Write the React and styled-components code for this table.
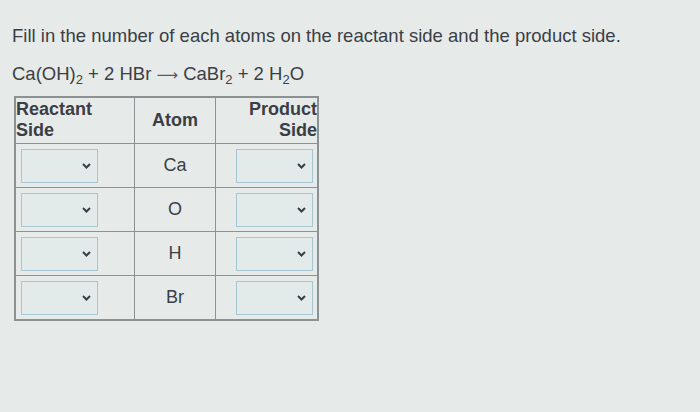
import React from 'react';
import styled, { createGlobalStyle } from 'styled-components';

const GlobalStyle = createGlobalStyle`
  html, body {
    margin: 0;
    padding: 0;
    background: #e6ebea;
  }
  body {
    font-family: "Liberation Sans", Arial, sans-serif;
    color: #3b3e45;
  }
`;

const Page = styled.div`
  width: 700px;
  height: 412px;
  padding: 24px 0 0 12px;
  box-sizing: border-box;
  background: #e6ebea;
`;

const Prompt = styled.div`
  font-size: 18.5px;
  line-height: 24px;
  margin: 0;
`;

const Equation = styled.div`
  font-size: 18.5px;
  line-height: 24px;
  margin-top: 14px;

  sub {
    font-size: 13px;
    vertical-align: -4px;
    line-height: 0;
  }
`;

const Arrow = styled.span`
  font-family: "DejaVu Sans", sans-serif;
  font-size: 15px;
  color: #55585e;
`;

const Table = styled.table`
  margin: 9px 0 0 2px;
  border-collapse: collapse;
  border: 2px solid #8c9194;
`;

const HeadCell = styled.th`
  font-size: 18px;
  font-weight: bold;
  line-height: 21px;
  padding: 1px 0 2px;
  text-align: ${(p) => p.align || 'center'};
  width: ${(p) => p.w}px;
  border: 1px solid #8c9194;
  vertical-align: middle;
`;

const Cell = styled.td`
  height: 43px;
  padding: 0;
  border: 1px solid #8c9194;
  text-align: center;
  font-size: 18px;
  vertical-align: middle;
`;

const SelectWrap = styled.div`
  display: flex;
  justify-content: ${(p) => (p.right ? 'flex-end' : 'flex-start')};
  padding: ${(p) => (p.right ? '0 4px 0 0' : '0 0 0 5px')};
`;

const Select = styled.div`
  width: ${(p) => p.w}px;
  height: 34px;
  box-sizing: border-box;
  border: 1.5px solid #a6c6d4;
  background: #e3eaea;
  display: flex;
  align-items: center;
  justify-content: flex-end;
  padding-right: 6px;
`;

const Chevron = () => (
  <svg width="9" height="6" viewBox="0 0 9 6">
    <path d="M1 1 L4.5 4.5 L8 1" fill="none" stroke="#3b3e45" strokeWidth="2" />
  </svg>
);

const atoms = ['Ca', 'O', 'H', 'Br'];

const App = () => (
  <Page>
    <GlobalStyle />
    <Prompt>Fill in the number of each atoms on the reactant side and the product side.</Prompt>
    <Equation>
      Ca(OH)<sub>2</sub> + 2 HBr <Arrow>⟶</Arrow> CaBr<sub>2</sub> + 2 H<sub>2</sub>O
    </Equation>
    <Table>
      <thead>
        <tr>
          <HeadCell align="left" w={118}>Reactant<br />Side</HeadCell>
          <HeadCell w={80}>Atom</HeadCell>
          <HeadCell align="right" w={101}>Product<br />Side</HeadCell>
        </tr>
      </thead>
      <tbody>
        {atoms.map((a) => (
          <tr key={a}>
            <Cell>
              <SelectWrap>
                <Select w={77}><Chevron /></Select>
              </SelectWrap>
            </Cell>
            <Cell>{a}</Cell>
            <Cell>
              <SelectWrap right>
                <Select w={77}><Chevron /></Select>
              </SelectWrap>
            </Cell>
          </tr>
        ))}
      </tbody>
    </Table>
  </Page>
);

export default App;
